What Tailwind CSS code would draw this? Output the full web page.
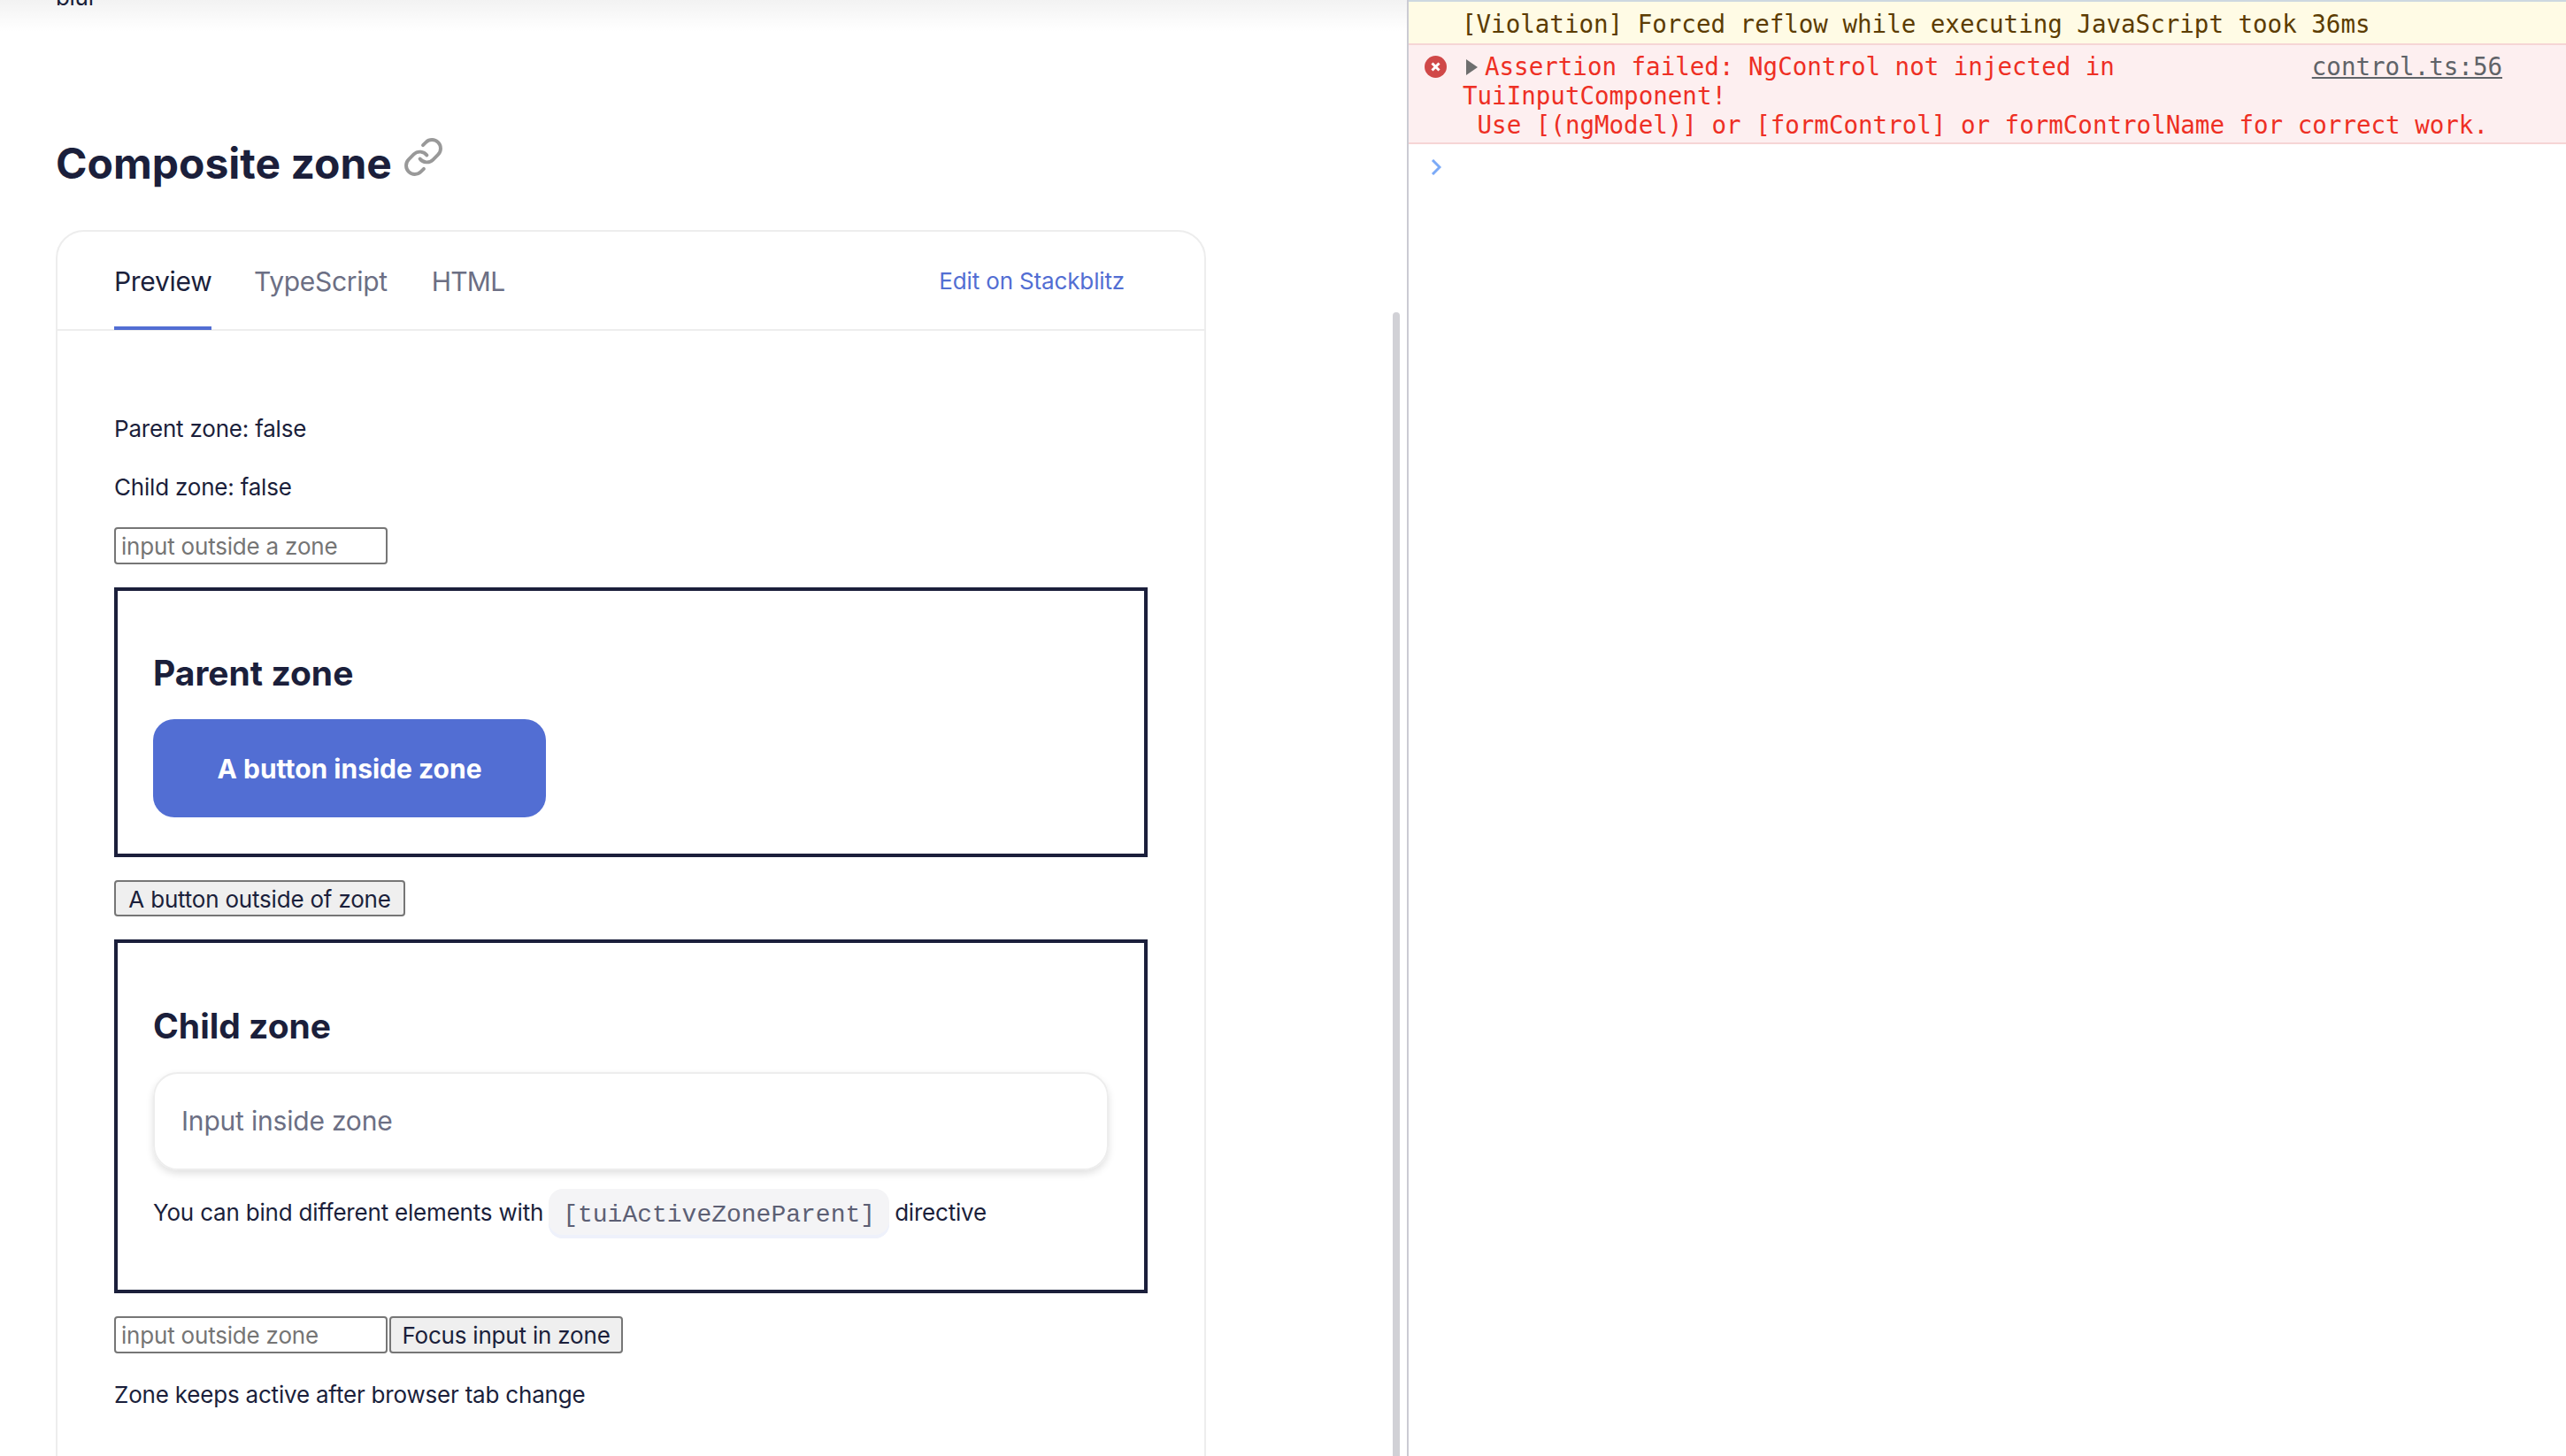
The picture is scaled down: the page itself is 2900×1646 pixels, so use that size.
<!DOCTYPE html>
<html lang="en">
<head>
  <meta charset="UTF-8" />
  <title>Composite zone</title>
  <script src="https://cdn.jsdelivr.net/npm/@tailwindcss/browser@4"></script>
</head>
<body class="bg-white text-[#1b1f3b] font-['Inter',sans-serif] overflow-hidden">
<div class="flex h-[1646px] w-[2900px]">

  <!-- Page panel -->
  <div class="relative w-[1592px] h-full shrink-0 overflow-hidden border-r-2 border-[#cbcbd3]">
    <div class="absolute top-0 left-0 right-0 h-[36px] bg-gradient-to-b from-black/5 to-transparent"></div>
    <div class="absolute top-[353px] left-[1574px] bottom-0 w-[8px] rounded-t bg-[#d1d1d6]"></div>

    <div class="h-[14px] ml-[63px] overflow-hidden">
      <p class="-mt-[23px] text-[26px] leading-[40px] tracking-[-0.3px]">blur</p>
    </div>

    <div class="mt-[136px] ml-[63px] flex items-start h-[70px]">
      <h2 class="w-[381px] text-[48px] leading-[70px] font-bold whitespace-nowrap">Composite zone</h2>
      <svg class="ml-[11px] mt-[4px]" width="47" height="47" viewBox="0 0 24 24" fill="none" stroke="#999999" stroke-width="2" stroke-linecap="round" stroke-linejoin="round">
        <path d="M10 13a5 5 0 0 0 7.54.54l3-3a5 5 0 0 0-7.07-7.07l-1.72 1.71"></path>
        <path d="M14 11a5 5 0 0 0-7.54-.54l-3 3a5 5 0 0 0 7.07 7.07l1.71-1.71"></path>
      </svg>
    </div>

    <!-- Card -->
    <div class="mt-[40px] ml-[63px] w-[1300px] h-[1500px] rounded-t-[32px] border-2 border-[#ededed]">
      <div class="flex items-start h-[112px] border-b-2 border-[#ededed] pl-[64px] pr-[90px]">
        <div class="h-[111px] w-[110px] border-b-4 border-[#526ed3] text-[30px] leading-[112px] tracking-[-0.3px]">Preview</div>
        <div class="ml-[48px] text-[30px] leading-[112px] tracking-[-0.3px] text-[#6c6f84]">TypeScript</div>
        <div class="ml-[50px] text-[30px] leading-[112px] tracking-[-0.8px] text-[#6c6f84]">HTML</div>
        <a class="ml-auto text-[26px] leading-[112px] tracking-[-0.15px] text-[#526ed3]">Edit on Stackblitz</a>
      </div>

      <div class="pl-[64px] w-[1232px] text-[26px] tracking-[-0.2px]">
        <p class="mt-[91px] leading-[40px]">Parent zone: false</p>
        <p class="mt-[26px] leading-[40px]">Child zone: false</p>
        <input class="block mt-[25px] w-[309px] h-[42px] px-[6px] border-2 border-[#767676] rounded-[4px] placeholder:text-[#757575]" placeholder="input outside a zone" />

        <section class="mt-[26px] h-[305px] border-4 border-[#1b1f3b] pl-[40px]">
          <h3 class="mt-[68px] text-[39px] leading-[50px] font-bold tracking-normal">Parent zone</h3>
          <button class="mt-[27px] w-[444px] h-[111px] pt-[1px] rounded-[24px] bg-[#526ed3] text-white text-[30px] font-bold tracking-normal">A button inside zone</button>
        </section>

        <button class="block mt-[26px] w-[329px] h-[41px] bg-[#efefef] border-2 border-[#767676] rounded-[4px]">A button outside of zone</button>

        <section class="mt-[26px] h-[400px] border-4 border-[#1b1f3b] pl-[40px] pr-[40px]">
          <h3 class="mt-[69px] text-[39px] leading-[50px] font-bold tracking-normal">Child zone</h3>
          <div class="mt-[27px] h-[111px] w-[1080px] rounded-[28px] border-2 border-[#ededed] shadow-[0_4px_8px_rgba(0,0,0,0.12)] pl-[30px] flex items-center text-[30px] tracking-[-0.2px] text-[#6c6f84]">Input inside zone</div>
          <p class="mt-[21px] flex items-center h-[56px]">
            <span class="-mt-[4px]">You can bind different elements with</span>
            <code class="ml-[6px] mr-[6px] w-[385px] h-[56px] pt-[4px] flex items-center justify-center rounded-[16px] bg-[#f4f4f6] shadow-[inset_0_-4px_0_#eef1fb] text-[28px] tracking-normal text-[#5c5f74] font-['Liberation_Mono',monospace]">[tuiActiveZoneParent]</code>
            <span class="-mt-[4px]">directive</span>
          </p>
        </section>

        <div class="mt-[26px] flex">
          <input class="block w-[309px] h-[42px] px-[6px] border-2 border-[#767676] rounded-[4px] placeholder:text-[#757575]" placeholder="input outside zone" />
          <button class="ml-[2px] w-[264px] h-[42px] bg-[#efefef] border-2 border-[#767676] rounded-[4px]">Focus input in zone</button>
        </div>

        <p class="mt-[27px] leading-[40px]">Zone keeps active after browser tab change</p>
      </div>
    </div>
  </div>

  <!-- Console panel -->
  <div class="flex-1 font-['DejaVu_Sans_Mono',monospace] text-[27.5px] leading-[33px]">
    <div class="h-[2px] bg-[#cdd8e0]"></div>
    <div class="h-[49px] pl-[60px] pt-[9px] bg-[#fffbe5] border-b-2 border-[#f6d5d5] text-[#5c3c00] whitespace-pre">[Violation] Forced reflow while executing JavaScript took 36ms</div>
    <div class="h-[112px] pt-[8px] pl-[61px] bg-[#fdeff0] border-b-2 border-[#f6d5d5] text-[#ee2f24]">
      <div class="flex items-center h-[33px]">
        <svg class="-ml-[43px] mr-[22px]" width="25" height="25" viewBox="0 0 25 25">
          <circle cx="12.5" cy="12.5" r="12.5" fill="#d04848"></circle>
          <path d="M8.5 8.5 L16.5 16.5 M16.5 8.5 L8.5 16.5" stroke="#ffffff" stroke-width="3"></path>
        </svg>
        <svg class="mr-[8px]" width="13" height="18" viewBox="0 0 13 18"><path d="M0 0 L13 9 L0 18 Z" fill="#6e6e6e"></path></svg>
        <span>Assertion failed: NgControl not injected in</span>
        <a class="ml-auto mr-[72px] text-[#5f6368] underline">control.ts:56</a>
      </div>
      <div>TuiInputComponent!</div>
      <div class="whitespace-pre"> Use [(ngModel)] or [formControl] or formControlName for correct work.</div>
    </div>
    <svg class="ml-[25px] mt-[17px]" width="12" height="18" viewBox="0 0 12 18" fill="none"><path d="M2 1 L10 9 L2 17" stroke="#7baaf7" stroke-width="3"></path></svg>
  </div>

</div>
</body>
</html>
